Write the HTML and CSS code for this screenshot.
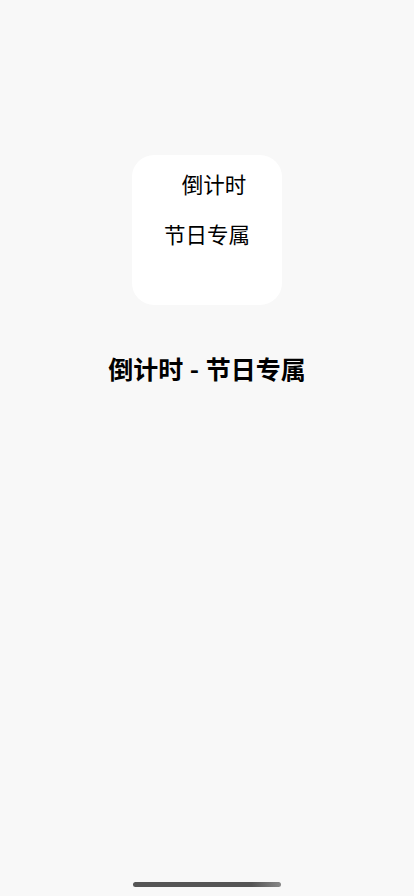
FILE: index.html
```html
<!DOCTYPE html>
<html lang="zh-CN">
  <head>
    <meta charset="UTF-8" />
    <title>倒计时 - 节日专属</title>
    <link rel="stylesheet" href="styles.css">
  </head>
  <body>
    <div class="page">
      <!-- 小组件预览 -->
      <div class="widget">
        <p class="widget-title">倒计时</p>
        <p class="widget-sub">节日专属</p>
      </div>
      <h1 class="page-title">倒计时 - 节日专属</h1>
      <!-- 底部横条 -->
      <div class="home-bar"></div>
    </div>
  </body>
</html>
```

FILE: styles.css
```css
* {
  margin: 0;
  padding: 0;
  box-sizing: border-box;
}

body {
  background-color: #f8f8f8;
  font-family: "Noto Sans CJK SC", "Noto Sans", sans-serif;
  color: #000;
}

.page {
  display: flex;
  flex-direction: column;
  align-items: center;
  min-height: 896px;
  padding-top: 155px;
}

.widget {
  display: flex;
  flex-direction: column;
  align-items: center;
  width: 150px;
  height: 150px;
  padding-top: 13px;
  background-color: #fff;
  border-radius: 22px;
}

.widget-title {
  margin-left: 14px;
  font-size: 21.5px;
}

.widget-sub {
  margin-top: 19px;
  font-size: 21.5px;
}

.page-title {
  margin-top: 45px;
  font-size: 25px;
  font-weight: bold;
  word-spacing: 1px;
}

.home-bar {
  margin-top: auto;
  margin-bottom: 9px;
  width: 148px;
  height: 5px;
  border-radius: 3px;
  background: linear-gradient(to right, #555, #555 80%, #888);
}
```
